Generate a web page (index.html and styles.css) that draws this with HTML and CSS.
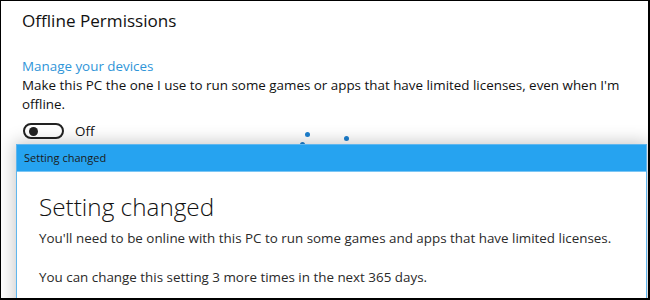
FILE: index.html
```html
<!DOCTYPE html>
<html>
<head>
<meta charset="utf-8">
<link rel="stylesheet" href="styles.css">
</head>
<body>
<div class="frame">
  <section class="settings">
    <h1 class="title">Offline Permissions</h1>
    <a class="link">Manage your devices</a>
    <p class="desc">Make this PC the one I use to run some games or apps that have limited licenses, even when I'm offline.</p>
    <div class="toggle-row">
      <span class="toggle"><span class="knob"></span></span>
      <span class="toggle-label">Off</span>
    </div>
  </section>
  <span class="dot d1"></span>
  <span class="dot d2"></span>
  <span class="dot d3"></span>
  <div class="dialog">
    <div class="dialog-bar">Setting changed</div>
    <div class="dialog-body">
      <h2 class="dialog-title">Setting changed</h2>
      <p class="dialog-text">You'll need to be online with this PC to run some games and apps that have limited licenses.</p>
      <p class="dialog-text">You can change this setting 3 more times in the next 365 days.</p>
    </div>
  </div>
</div>
</body>
</html>
```
FILE: styles.css
```css
* { box-sizing: border-box; }
html, body { margin: 0; padding: 0; background: #fff; }
body { font-family: "Open Sans", "Noto Sans", sans-serif; color: #111; }
.frame {
  position: relative;
  width: 650px;
  height: 300px;
  overflow: hidden;
  border-style: solid;
  border-color: #000;
  border-width: 1px 2px 2px 1px;
  background: #fff;
}
.settings { padding: 7px 0 0 21px; }
.title { margin: 0; font-size: 17.1px; font-weight: 400; line-height: 26px; color: #111; }
.link { display: block; margin-top: 23px; font-size: 13.4px; line-height: 19px; color: #2f95d8; }
.desc { margin: 0; font-size: 13.4px; line-height: 19px; width: 600px; color: #111; }
.toggle-row { display: flex; align-items: center; gap: 11px; margin-top: 8px; padding-left: 1px; }
.toggle {
  width: 41px; height: 16px; border: 2px solid #222; border-radius: 8px;
  display: flex; align-items: center; padding-left: 4px;
}
.knob { width: 9px; height: 9px; border-radius: 50%; background: #222; }
.toggle-label { font-size: 13.4px; line-height: 18px; }
.dot { position: absolute; width: 5px; height: 5px; border-radius: 50%; background: #1c7fcf; }
.d1 { left: 304px; top: 131px; }
.d2 { left: 343px; top: 135px; }
.d3 { left: 299px; top: 141px; }
.dialog {
  position: absolute;
  left: 15px; top: 143px; right: 1px; bottom: -20px;
  background: #fff;
  border: 1px solid #5fb6ee;
  box-shadow: 0 0 16px 2px rgba(0,0,0,0.22);
}
.dialog-bar {
  height: 27px; background: #26a3f0; color: #1a1a1a;
  font-size: 11px; line-height: 26px; padding-left: 7px;
  border-bottom: 1px solid #7cc6f4;
}
.dialog-body { padding: 18px 0 0 22px; }
.dialog-title { margin: 0; font-size: 24.3px; font-weight: 300; line-height: 34px; color: #111; }
.dialog-text { margin: 5px 0 20px; font-size: 13.4px; line-height: 19px; color: #2a2a2a; }
```
